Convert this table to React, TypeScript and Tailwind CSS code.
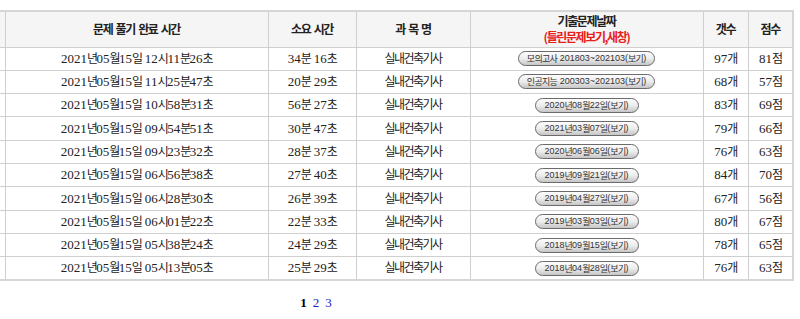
import React from "react";

type Row = [string, string, string, string, string];

const rows: Row[] = [
  ["2021년05월15일 12시11분26초", "34분 16초", "모의고사 201803~202103(보기)", "97개", "81점"],
  ["2021년05월15일 11시25분47초", "20분 29초", "인공지능 200303~202103(보기)", "68개", "57점"],
  ["2021년05월15일 10시58분31초", "56분 27초", "2020년08월22일(보기)", "83개", "69점"],
  ["2021년05월15일 09시54분51초", "30분 47초", "2021년03월07일(보기)", "79개", "66점"],
  ["2021년05월15일 09시23분32초", "28분 37초", "2020년06월06일(보기)", "76개", "63점"],
  ["2021년05월15일 06시56분38초", "27분 40초", "2019년09월21일(보기)", "84개", "70점"],
  ["2021년05월15일 06시28분30초", "26분 39초", "2019년04월27일(보기)", "67개", "56점"],
  ["2021년05월15일 06시01분22초", "22분 33초", "2019년03월03일(보기)", "80개", "67점"],
  ["2021년05월15일 05시38분24초", "24분 29초", "2018년09월15일(보기)", "78개", "65점"],
  ["2021년05월15일 05시13분05초", "25분 29초", "2018년04월28일(보기)", "76개", "63점"],
];

function Mixed({ text, kor, lat }: { text: string; kor: string; lat: string }) {
  const parts = text.split(/([\uAC00-\uD7A3]+)/).filter((p) => p.length > 0);
  return (
    <>
      {parts.map((p, i) =>
        /[\uAC00-\uD7A3]/.test(p) ? (
          <span key={i} className={kor}>
            {p}
          </span>
        ) : (
          <span key={i} className={lat}>
            {p}
          </span>
        )
      )}
    </>
  );
}

const dataLat = "whitespace-pre [font-family:'Liberation_Serif',serif] text-[13px]";
const dataKor = "[font-family:'Noto_Sans_CJK_KR',sans-serif] text-[12px] tracking-[-1.5px]";
const headKor = "[font-family:'Noto_Sans_CJK_KR',sans-serif] text-[12px] tracking-[-1.4px] font-bold";
const btnLat = "whitespace-pre [font-family:'Liberation_Sans',sans-serif] text-[9px]";
const btnKor = "[font-family:'Noto_Sans_CJK_KR',sans-serif] text-[9px] tracking-[-0.7px]";

function Btn({ label }: { label: string }) {
  const wide = label.length > 20;
  return (
    <div
      className={
        (wide ? "w-[137px] " : "w-[104px] ") +
        "mx-auto h-[15px] rounded-full border border-[#6b6b6b] bg-gradient-to-b from-[#fdfdfd] via-[#ededed] to-[#c6c6c6] flex items-center justify-center leading-none text-[#333] whitespace-nowrap"
      }
    >
      <Mixed text={label} kor={btnKor} lat={btnLat} />
    </div>
  );
}

export default function App() {
  const td = "border border-[#cfcfcf] text-center align-middle p-0";
  return (
    <div className="w-[800px] h-[319px] overflow-hidden bg-white">
      <div className="ml-[-160px] w-[952px] pt-[10px]">
        <table className="w-full border-collapse table-fixed border-2 border-[#d6d6d6] text-[13px] text-[#222] [font-family:'Liberation_Serif',serif]">
          <colgroup>
            <col className="w-[164px]" />
            <col className="w-[263px]" />
            <col className="w-[88px]" />
            <col className="w-[114px]" />
            <col className="w-[233px]" />
            <col className="w-[45px]" />
            <col className="w-[45px]" />
          </colgroup>
          <thead>
            <tr className="h-[36px] bg-[#f5f5f5]">
              <th className={td}></th>
              <th className={td}>
                <span className={headKor}>문제</span> <span className={headKor}>풀기</span>{" "}
                <span className={headKor}>완료</span> <span className={headKor}>시간</span>
              </th>
              <th className={td}>
                <span className={headKor}>소요</span> <span className={headKor}>시간</span>
              </th>
              <th className={td}>
                <span className={headKor}>과</span> <span className={headKor}>목</span>{" "}
                <span className={headKor}>명</span>
              </th>
              <th className={td}>
                <div className={headKor + " leading-[16px]"}>기출문제날짜</div>
                <div className={headKor + " leading-[16px] text-[#e8201a]"}>(틀린문제보기,새창)</div>
              </th>
              <th className={td}>
                <span className={headKor}>갯수</span>
              </th>
              <th className={td}>
                <span className={headKor}>점수</span>
              </th>
            </tr>
          </thead>
          <tbody>
            {rows.map((r, i) => (
              <tr key={i} className="h-[23.3px]">
                <td className={td}></td>
                <td className={td}>
                  <Mixed text={r[0]} kor={dataKor} lat={dataLat} />
                </td>
                <td className={td}>
                  <Mixed text={r[1]} kor={dataKor} lat={dataLat} />
                </td>
                <td className={td}>
                  <span className={dataKor}>실내건축기사</span>
                </td>
                <td className={td}>
                  <Btn label={r[2]} />
                </td>
                <td className={td}>
                  <Mixed text={r[3]} kor={dataKor} lat={dataLat} />
                </td>
                <td className={td}>
                  <Mixed text={r[4]} kor={dataKor} lat={dataLat} />
                </td>
              </tr>
            ))}
          </tbody>
        </table>
        <div className="mt-[12px] flex justify-center gap-[6px] text-[13px] [font-family:'Liberation_Serif',serif]">
          <span className="font-bold text-black">1</span>
          <span className="text-[#2222cc]">2</span>
          <span className="text-[#2222cc]">3</span>
        </div>
      </div>
    </div>
  );
}
